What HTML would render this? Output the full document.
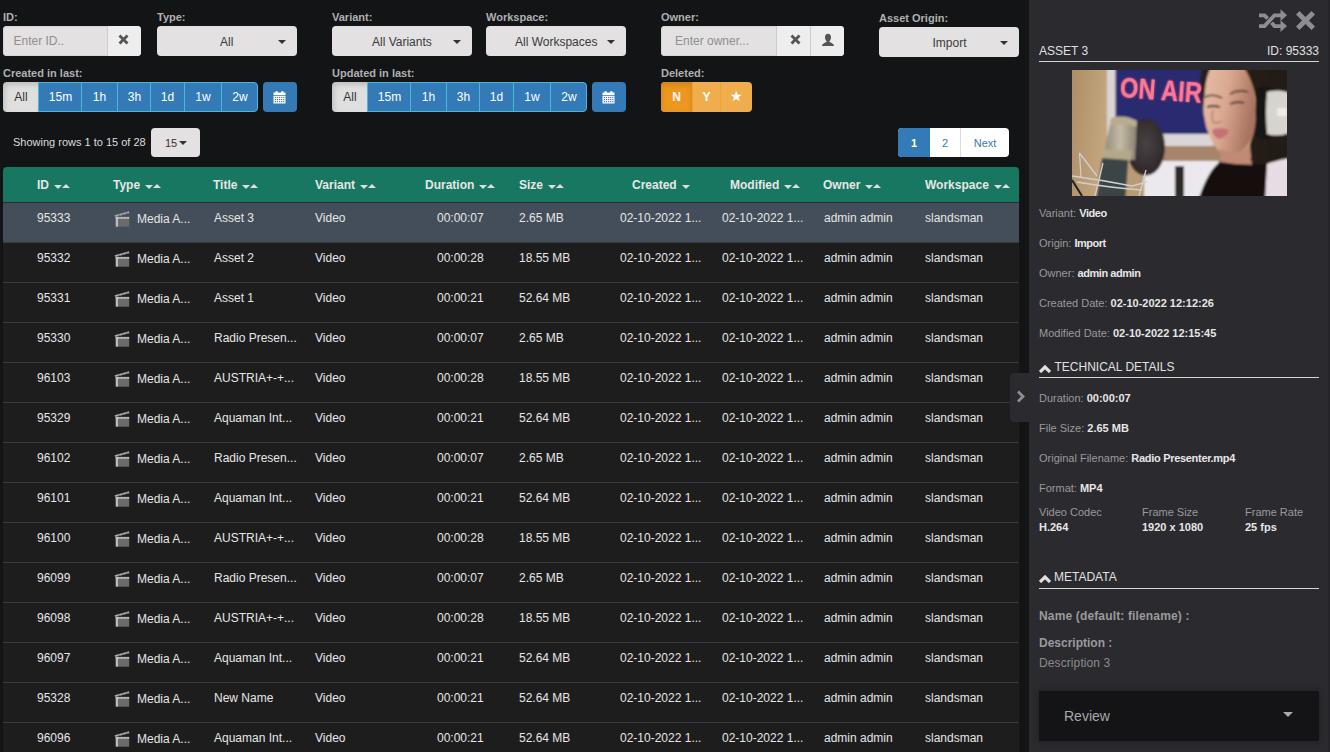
<!DOCTYPE html>
<html><head><meta charset="utf-8">
<style>
*{box-sizing:border-box;margin:0;padding:0}
html,body{width:1330px;height:752px;overflow:hidden;background:#131416;font-family:"Liberation Sans",sans-serif;color:#ddd}
.a{position:absolute}
.lbl{position:absolute;font-size:11px;font-weight:bold;color:#b0b0b0;line-height:13px}
.inp{position:absolute;height:30px;background:#e3e1e2;border-radius:4px;overflow:hidden;box-shadow:inset 0 0 0 1px #d6d4d5}
.ph{position:absolute;font-size:12px;color:#8f8f8f;line-height:30px}
.addon{position:absolute;top:0;height:30px;background:#eeeeee;border-left:1px solid #ccc}
.sel{position:absolute;height:30px;background:#e3e1e2;border-radius:4px;font-size:12px;color:#3a3a3a;line-height:32px}
.caret{position:absolute;width:0;height:0;border-left:4px solid transparent;border-right:4px solid transparent;border-top:4px solid #333}
.grp{position:absolute;height:30px;border-radius:4px;background:#337ab7;border:1px solid #46b8da;overflow:hidden}
.grp div{position:absolute;top:0;height:28px;line-height:28px;text-align:center;font-size:12px;color:#fff;border-left:1px solid #46b8da}
.grp div.act{background:#e0dfe0;color:#333;border-left:none;box-shadow:inset 0 3px 5px rgba(0,0,0,.125)}
.allb{position:absolute;width:36px;height:30px;border-radius:4px 0 0 4px;background:#e0dfe0;color:#333;font-size:12px;line-height:30px;text-align:center;box-shadow:inset 2px 3px 5px rgba(0,0,0,.14)}
.grp{border-radius:0 4px 4px 0}
.cal{position:absolute;width:34px;height:30px;border-radius:4px;background:#337ab7}
table{border-collapse:collapse}
.hdr{position:absolute;left:3px;top:167px;width:1016px;height:35px;background:#177760;border-radius:4px 4px 0 0}
.th{position:absolute;top:1px;line-height:35px;font-size:12px;font-weight:bold;color:#e6e6e6}
.row{position:absolute;left:3px;width:1016px;height:40px;background:#1d1d1e;border-top:1px solid #3a3a3a}
.td{position:absolute;top:0;line-height:30px;font-size:12px;color:#e6e6e6;white-space:nowrap}
.row.rsel{background:#444e5a;border-top-color:#2e2c2b}
.row .clap{position:absolute;left:111px;top:7px}
.th i{display:inline-block;position:relative;width:16px;height:8px;margin-left:5px;vertical-align:middle;top:1px}
.th i.srt:before{content:"";position:absolute;left:0;top:2px;border-left:4px solid transparent;border-right:4px solid transparent;border-top:4px solid #ddd}
.th i.srt:after{content:"";position:absolute;left:8px;top:1px;border-left:4px solid transparent;border-right:4px solid transparent;border-bottom:4px solid #ddd}
.th i.dn:before{content:"";position:absolute;left:0;top:2px;border-left:4px solid transparent;border-right:4px solid transparent;border-top:4px solid #ddd}
.pl{position:absolute;left:10px;font-size:11px;color:#9a9a9c;line-height:15px;white-space:nowrap}
.pl b{color:#e6e6e6}
.sh{position:absolute;left:10px;font-size:12px;color:#e0e0e0;line-height:15px}
.chev{display:inline-block;position:relative;width:12px;height:10px;margin-right:3px}
.chev:before{content:"";position:absolute;left:2px;top:6px;width:6px;height:6px;border-left:3px solid #e0e0e0;border-top:3px solid #e0e0e0;transform:rotate(45deg)}
.panel{position:absolute;left:1029px;top:0;width:301px;height:752px;background:#2b2a2f}
</style></head><body>

<!-- Filters row 1 -->
<div class="lbl" style="left:3px;top:11px">ID:</div>
<div class="inp" style="left:3px;top:26px;width:138px">
  <div class="ph" style="left:10.5px">Enter ID..</div>
  <div class="addon" style="left:104px;width:34px"></div><svg class="a" style="left:115px;top:8px" width="11" height="11" viewBox="0 0 11 11"><path d="M0.5 2.5L2.5 0.5 5.5 3.5 8.5 0.5 10.5 2.5 7.5 5.5 10.5 8.5 8.5 10.5 5.5 7.5 2.5 10.5 0.5 8.5 3.5 5.5z" fill="#555"/></svg>
</div>

<div class="lbl" style="left:157px;top:11px">Type:</div>
<div class="sel" style="left:157px;top:26px;width:140px"><span class="a" style="left:63px">All</span><div class="caret" style="left:121px;top:14px"></div></div>

<div class="lbl" style="left:332px;top:11px">Variant:</div>
<div class="sel" style="left:332px;top:26px;width:140px"><span class="a" style="left:40px">All Variants</span><div class="caret" style="left:121px;top:14px"></div></div>

<div class="lbl" style="left:486px;top:11px">Workspace:</div>
<div class="sel" style="left:486px;top:26px;width:140px"><span class="a" style="left:29px">All Workspaces</span><div class="caret" style="left:121px;top:14px"></div></div>

<div class="lbl" style="left:661px;top:11px">Owner:</div>
<div class="inp" style="left:661px;top:26px;width:183px">
  <div class="ph" style="left:14px">Enter owner...</div>
  <div class="addon" style="left:115px;width:34px"></div>
  <div class="addon" style="left:149px;width:34px"></div><svg class="a" style="left:129px;top:8px" width="11" height="11" viewBox="0 0 11 11"><path d="M0.5 2.5L2.5 0.5 5.5 3.5 8.5 0.5 10.5 2.5 7.5 5.5 10.5 8.5 8.5 10.5 5.5 7.5 2.5 10.5 0.5 8.5 3.5 5.5z" fill="#555"/></svg>
</div>

<div class="lbl" style="left:879px;top:12px">Asset Origin:</div>
<div class="sel" style="left:879px;top:27px;width:140px"><span class="a" style="left:53.5px">Import</span><div class="caret" style="left:121px;top:14px"></div></div>

<!-- Row 2 -->
<div class="lbl" style="left:3px;top:67px">Created in last:</div>
<div class="allb" style="left:3px;top:82px">All</div>
<div class="grp" style="left:38px;top:82px;width:220px">
  <div style="left:0;width:43px;border-left:none">15m</div>
  <div style="left:42px;width:36px">1h</div>
  <div style="left:78px;width:34px">3h</div>
  <div style="left:111px;width:34px">1d</div>
  <div style="left:145px;width:37px">1w</div>
  <div style="left:182px;width:37px">2w</div>
</div>
<div class="cal" style="left:263px;top:82px"></div><svg class="a" style="left:273px;top:90px" width="13" height="14" viewBox="0 0 13 14"><path d="M0.5 2.5h2V1.2h2.2v1.3h3.6V1.2h2.2v1.3h2v2.8H0.5z" fill="#fff"/><rect x="0.5" y="6" width="12" height="7.5" fill="#fff"/><g fill="#5b6fd6"><rect x="1.8" y="6.9" width="1.2" height="1.2"/><rect x="1.8" y="9.0" width="1.2" height="1.2"/><rect x="1.8" y="11.1" width="1.2" height="1.2"/><rect x="3.9" y="6.9" width="1.2" height="1.2"/><rect x="3.9" y="9.0" width="1.2" height="1.2"/><rect x="3.9" y="11.1" width="1.2" height="1.2"/><rect x="6.0" y="6.9" width="1.2" height="1.2"/><rect x="6.0" y="9.0" width="1.2" height="1.2"/><rect x="6.0" y="11.1" width="1.2" height="1.2"/><rect x="8.1" y="6.9" width="1.2" height="1.2"/><rect x="8.1" y="9.0" width="1.2" height="1.2"/><rect x="8.1" y="11.1" width="1.2" height="1.2"/><rect x="10.2" y="6.9" width="1.2" height="1.2"/><rect x="10.2" y="9.0" width="1.2" height="1.2"/><rect x="10.2" y="11.1" width="1.2" height="1.2"/></g></svg>

<div class="lbl" style="left:332px;top:67px">Updated in last:</div>
<div class="allb" style="left:332px;top:82px">All</div>
<div class="grp" style="left:367px;top:82px;width:220px">
  <div style="left:0;width:43px;border-left:none">15m</div>
  <div style="left:42px;width:36px">1h</div>
  <div style="left:78px;width:34px">3h</div>
  <div style="left:111px;width:34px">1d</div>
  <div style="left:145px;width:37px">1w</div>
  <div style="left:182px;width:37px">2w</div>
</div>
<div class="cal" style="left:592px;top:82px"></div><svg class="a" style="left:602px;top:90px" width="13" height="14" viewBox="0 0 13 14"><path d="M0.5 2.5h2V1.2h2.2v1.3h3.6V1.2h2.2v1.3h2v2.8H0.5z" fill="#fff"/><rect x="0.5" y="6" width="12" height="7.5" fill="#fff"/><g fill="#5b6fd6"><rect x="1.8" y="6.9" width="1.2" height="1.2"/><rect x="1.8" y="9.0" width="1.2" height="1.2"/><rect x="1.8" y="11.1" width="1.2" height="1.2"/><rect x="3.9" y="6.9" width="1.2" height="1.2"/><rect x="3.9" y="9.0" width="1.2" height="1.2"/><rect x="3.9" y="11.1" width="1.2" height="1.2"/><rect x="6.0" y="6.9" width="1.2" height="1.2"/><rect x="6.0" y="9.0" width="1.2" height="1.2"/><rect x="6.0" y="11.1" width="1.2" height="1.2"/><rect x="8.1" y="6.9" width="1.2" height="1.2"/><rect x="8.1" y="9.0" width="1.2" height="1.2"/><rect x="8.1" y="11.1" width="1.2" height="1.2"/><rect x="10.2" y="6.9" width="1.2" height="1.2"/><rect x="10.2" y="9.0" width="1.2" height="1.2"/><rect x="10.2" y="11.1" width="1.2" height="1.2"/></g></svg>

<svg class="a" style="left:821px;top:33px" width="14" height="14" viewBox="0 0 14 14"><path d="M7 0.8C8.9 0.8 10 2.2 10 4.2 10 6 9.2 7.6 8.4 8.2L8.4 9C10.5 9.6 12.6 11 13.2 13H0.8C1.4 11 3.5 9.6 5.6 9L5.6 8.2C4.8 7.6 4 6 4 4.2 4 2.2 5.1 0.8 7 0.8z" fill="#555"/></svg>
<div class="lbl" style="left:661px;top:67px">Deleted:</div>

<!-- Row 3 -->
<div class="a" style="left:13px;top:136px;font-size:11px;color:#ddd">Showing rows 1 to 15 of 28</div>

<!-- deleted -->
<div class="a" style="left:661px;top:82px;width:91px;height:30px;border-radius:4px;overflow:hidden;background:#f0ad4e">
  <div class="a" style="left:0;top:0;width:31px;height:30px;background:#ec971f;box-shadow:inset 0 3px 5px rgba(0,0,0,.125);color:#fff;font-size:12px;line-height:30px;text-align:center;font-weight:bold">N</div>
  <div class="a" style="left:31px;top:0;width:28px;height:30px;border-left:1px solid #eea236;color:#fff;font-size:12px;line-height:30px;text-align:center;font-weight:bold">Y</div>
  <div class="a" style="left:59px;top:0;width:32px;height:30px;border-left:1px solid #eea236;color:#fff;font-size:14px;line-height:28px;padding-right:1px;text-align:center">&#9733;</div>
</div>
<!-- page size -->
<div class="a" style="left:151px;top:128px;width:49px;height:29px;border-radius:4px;background:#e3e1e2;color:#333;font-size:11px;line-height:30px"><span class="a" style="left:14px">15</span><div class="caret" style="left:28px;top:13px;border-width:4px 4px 0 4px"></div></div>
<!-- pagination -->
<div class="a" style="left:898px;top:128px;width:111px;height:29px;border-radius:4px;overflow:hidden;background:#fff;font-size:11px;line-height:30px">
  <div class="a" style="left:0;top:0;width:32px;height:29px;background:#337ab7;color:#fff;text-align:center;font-weight:bold">1</div>
  <div class="a" style="left:32px;top:0;width:31px;height:29px;color:#337ab7;text-align:center;border-right:1px solid #ddd">2</div>
  <div class="a" style="left:63px;top:0;width:48px;height:29px;color:#337ab7;text-align:center">Next</div>
</div>
<!-- table -->
<div class="hdr">
  <div class="th" style="left:34px">ID<i class="srt"></i></div>
  <div class="th" style="left:110px">Type<i class="srt"></i></div>
  <div class="th" style="left:210px">Title<i class="srt"></i></div>
  <div class="th" style="left:312px">Variant<i class="srt"></i></div>
  <div class="th" style="left:422px">Duration<i class="srt"></i></div>
  <div class="th" style="left:516px">Size<i class="srt"></i></div>
  <div class="th" style="left:629px">Created<i class="dn"></i></div>
  <div class="th" style="left:727px">Modified<i class="srt"></i></div>
  <div class="th" style="left:820px">Owner<i class="srt"></i></div>
  <div class="th" style="left:922px">Workspace<i class="srt"></i></div>
</div>
<!--ROWS-->
<div class="row rsel" style="top:202px"><div class="td" style="left:34px">95333</div><svg class="clap" width="17" height="18" viewBox="0 0 17 18"><rect x="3.8" y="8.6" width="11.4" height="8.1" fill="#6b6b6b"/><rect x="1.7" y="7.2" width="2.3" height="9.5" fill="#bcbcbc"/><rect x="1.7" y="6.9" width="13.5" height="1.9" fill="#c4c4c4"/><g fill="#8a8a8a"><rect x="5.2" y="7.4" width="1.4" height="1"/><rect x="8.4" y="7.4" width="1.4" height="1"/><rect x="11.6" y="7.4" width="1.4" height="1"/></g><path d="M0.6 5.2 L15 1.2 L15.3 3.2 L1.2 7.1 z" fill="#a9a9a9"/><g fill="#6a6a6a"><path d="M4.3 4.9 l1.6-0.45 0.3 1.1 -1.6 0.45z"/><path d="M8 3.9 l1.6-0.45 0.3 1.1 -1.6 0.45z"/><path d="M11.7 2.85 l1.6-0.45 0.3 1.1 -1.6 0.45z"/></g></svg><div class="td" style="left:134px;top:1px">Media A...</div><div class="td" style="left:211px">Asset 3</div><div class="td" style="left:312px">Video</div><div class="td" style="left:434px">00:00:07</div><div class="td" style="left:516px">2.65 MB</div><div class="td" style="left:617px">02-10-2022 1...</div><div class="td" style="left:719px">02-10-2022 1...</div><div class="td" style="left:821px">admin admin</div><div class="td" style="left:922px">slandsman</div></div>
<div class="row" style="top:242px"><div class="td" style="left:34px">95332</div><svg class="clap" width="17" height="18" viewBox="0 0 17 18"><rect x="3.8" y="8.6" width="11.4" height="8.1" fill="#6b6b6b"/><rect x="1.7" y="7.2" width="2.3" height="9.5" fill="#bcbcbc"/><rect x="1.7" y="6.9" width="13.5" height="1.9" fill="#c4c4c4"/><g fill="#8a8a8a"><rect x="5.2" y="7.4" width="1.4" height="1"/><rect x="8.4" y="7.4" width="1.4" height="1"/><rect x="11.6" y="7.4" width="1.4" height="1"/></g><path d="M0.6 5.2 L15 1.2 L15.3 3.2 L1.2 7.1 z" fill="#a9a9a9"/><g fill="#6a6a6a"><path d="M4.3 4.9 l1.6-0.45 0.3 1.1 -1.6 0.45z"/><path d="M8 3.9 l1.6-0.45 0.3 1.1 -1.6 0.45z"/><path d="M11.7 2.85 l1.6-0.45 0.3 1.1 -1.6 0.45z"/></g></svg><div class="td" style="left:134px;top:1px">Media A...</div><div class="td" style="left:211px">Asset 2</div><div class="td" style="left:312px">Video</div><div class="td" style="left:434px">00:00:28</div><div class="td" style="left:516px">18.55 MB</div><div class="td" style="left:617px">02-10-2022 1...</div><div class="td" style="left:719px">02-10-2022 1...</div><div class="td" style="left:821px">admin admin</div><div class="td" style="left:922px">slandsman</div></div>
<div class="row" style="top:282px"><div class="td" style="left:34px">95331</div><svg class="clap" width="17" height="18" viewBox="0 0 17 18"><rect x="3.8" y="8.6" width="11.4" height="8.1" fill="#6b6b6b"/><rect x="1.7" y="7.2" width="2.3" height="9.5" fill="#bcbcbc"/><rect x="1.7" y="6.9" width="13.5" height="1.9" fill="#c4c4c4"/><g fill="#8a8a8a"><rect x="5.2" y="7.4" width="1.4" height="1"/><rect x="8.4" y="7.4" width="1.4" height="1"/><rect x="11.6" y="7.4" width="1.4" height="1"/></g><path d="M0.6 5.2 L15 1.2 L15.3 3.2 L1.2 7.1 z" fill="#a9a9a9"/><g fill="#6a6a6a"><path d="M4.3 4.9 l1.6-0.45 0.3 1.1 -1.6 0.45z"/><path d="M8 3.9 l1.6-0.45 0.3 1.1 -1.6 0.45z"/><path d="M11.7 2.85 l1.6-0.45 0.3 1.1 -1.6 0.45z"/></g></svg><div class="td" style="left:134px;top:1px">Media A...</div><div class="td" style="left:211px">Asset 1</div><div class="td" style="left:312px">Video</div><div class="td" style="left:434px">00:00:21</div><div class="td" style="left:516px">52.64 MB</div><div class="td" style="left:617px">02-10-2022 1...</div><div class="td" style="left:719px">02-10-2022 1...</div><div class="td" style="left:821px">admin admin</div><div class="td" style="left:922px">slandsman</div></div>
<div class="row" style="top:322px"><div class="td" style="left:34px">95330</div><svg class="clap" width="17" height="18" viewBox="0 0 17 18"><rect x="3.8" y="8.6" width="11.4" height="8.1" fill="#6b6b6b"/><rect x="1.7" y="7.2" width="2.3" height="9.5" fill="#bcbcbc"/><rect x="1.7" y="6.9" width="13.5" height="1.9" fill="#c4c4c4"/><g fill="#8a8a8a"><rect x="5.2" y="7.4" width="1.4" height="1"/><rect x="8.4" y="7.4" width="1.4" height="1"/><rect x="11.6" y="7.4" width="1.4" height="1"/></g><path d="M0.6 5.2 L15 1.2 L15.3 3.2 L1.2 7.1 z" fill="#a9a9a9"/><g fill="#6a6a6a"><path d="M4.3 4.9 l1.6-0.45 0.3 1.1 -1.6 0.45z"/><path d="M8 3.9 l1.6-0.45 0.3 1.1 -1.6 0.45z"/><path d="M11.7 2.85 l1.6-0.45 0.3 1.1 -1.6 0.45z"/></g></svg><div class="td" style="left:134px;top:1px">Media A...</div><div class="td" style="left:211px">Radio Presen...</div><div class="td" style="left:312px">Video</div><div class="td" style="left:434px">00:00:07</div><div class="td" style="left:516px">2.65 MB</div><div class="td" style="left:617px">02-10-2022 1...</div><div class="td" style="left:719px">02-10-2022 1...</div><div class="td" style="left:821px">admin admin</div><div class="td" style="left:922px">slandsman</div></div>
<div class="row" style="top:362px"><div class="td" style="left:34px">96103</div><svg class="clap" width="17" height="18" viewBox="0 0 17 18"><rect x="3.8" y="8.6" width="11.4" height="8.1" fill="#6b6b6b"/><rect x="1.7" y="7.2" width="2.3" height="9.5" fill="#bcbcbc"/><rect x="1.7" y="6.9" width="13.5" height="1.9" fill="#c4c4c4"/><g fill="#8a8a8a"><rect x="5.2" y="7.4" width="1.4" height="1"/><rect x="8.4" y="7.4" width="1.4" height="1"/><rect x="11.6" y="7.4" width="1.4" height="1"/></g><path d="M0.6 5.2 L15 1.2 L15.3 3.2 L1.2 7.1 z" fill="#a9a9a9"/><g fill="#6a6a6a"><path d="M4.3 4.9 l1.6-0.45 0.3 1.1 -1.6 0.45z"/><path d="M8 3.9 l1.6-0.45 0.3 1.1 -1.6 0.45z"/><path d="M11.7 2.85 l1.6-0.45 0.3 1.1 -1.6 0.45z"/></g></svg><div class="td" style="left:134px;top:1px">Media A...</div><div class="td" style="left:211px">AUSTRIA+-+...</div><div class="td" style="left:312px">Video</div><div class="td" style="left:434px">00:00:28</div><div class="td" style="left:516px">18.55 MB</div><div class="td" style="left:617px">02-10-2022 1...</div><div class="td" style="left:719px">02-10-2022 1...</div><div class="td" style="left:821px">admin admin</div><div class="td" style="left:922px">slandsman</div></div>
<div class="row" style="top:402px"><div class="td" style="left:34px">95329</div><svg class="clap" width="17" height="18" viewBox="0 0 17 18"><rect x="3.8" y="8.6" width="11.4" height="8.1" fill="#6b6b6b"/><rect x="1.7" y="7.2" width="2.3" height="9.5" fill="#bcbcbc"/><rect x="1.7" y="6.9" width="13.5" height="1.9" fill="#c4c4c4"/><g fill="#8a8a8a"><rect x="5.2" y="7.4" width="1.4" height="1"/><rect x="8.4" y="7.4" width="1.4" height="1"/><rect x="11.6" y="7.4" width="1.4" height="1"/></g><path d="M0.6 5.2 L15 1.2 L15.3 3.2 L1.2 7.1 z" fill="#a9a9a9"/><g fill="#6a6a6a"><path d="M4.3 4.9 l1.6-0.45 0.3 1.1 -1.6 0.45z"/><path d="M8 3.9 l1.6-0.45 0.3 1.1 -1.6 0.45z"/><path d="M11.7 2.85 l1.6-0.45 0.3 1.1 -1.6 0.45z"/></g></svg><div class="td" style="left:134px;top:1px">Media A...</div><div class="td" style="left:211px">Aquaman Int...</div><div class="td" style="left:312px">Video</div><div class="td" style="left:434px">00:00:21</div><div class="td" style="left:516px">52.64 MB</div><div class="td" style="left:617px">02-10-2022 1...</div><div class="td" style="left:719px">02-10-2022 1...</div><div class="td" style="left:821px">admin admin</div><div class="td" style="left:922px">slandsman</div></div>
<div class="row" style="top:442px"><div class="td" style="left:34px">96102</div><svg class="clap" width="17" height="18" viewBox="0 0 17 18"><rect x="3.8" y="8.6" width="11.4" height="8.1" fill="#6b6b6b"/><rect x="1.7" y="7.2" width="2.3" height="9.5" fill="#bcbcbc"/><rect x="1.7" y="6.9" width="13.5" height="1.9" fill="#c4c4c4"/><g fill="#8a8a8a"><rect x="5.2" y="7.4" width="1.4" height="1"/><rect x="8.4" y="7.4" width="1.4" height="1"/><rect x="11.6" y="7.4" width="1.4" height="1"/></g><path d="M0.6 5.2 L15 1.2 L15.3 3.2 L1.2 7.1 z" fill="#a9a9a9"/><g fill="#6a6a6a"><path d="M4.3 4.9 l1.6-0.45 0.3 1.1 -1.6 0.45z"/><path d="M8 3.9 l1.6-0.45 0.3 1.1 -1.6 0.45z"/><path d="M11.7 2.85 l1.6-0.45 0.3 1.1 -1.6 0.45z"/></g></svg><div class="td" style="left:134px;top:1px">Media A...</div><div class="td" style="left:211px">Radio Presen...</div><div class="td" style="left:312px">Video</div><div class="td" style="left:434px">00:00:07</div><div class="td" style="left:516px">2.65 MB</div><div class="td" style="left:617px">02-10-2022 1...</div><div class="td" style="left:719px">02-10-2022 1...</div><div class="td" style="left:821px">admin admin</div><div class="td" style="left:922px">slandsman</div></div>
<div class="row" style="top:482px"><div class="td" style="left:34px">96101</div><svg class="clap" width="17" height="18" viewBox="0 0 17 18"><rect x="3.8" y="8.6" width="11.4" height="8.1" fill="#6b6b6b"/><rect x="1.7" y="7.2" width="2.3" height="9.5" fill="#bcbcbc"/><rect x="1.7" y="6.9" width="13.5" height="1.9" fill="#c4c4c4"/><g fill="#8a8a8a"><rect x="5.2" y="7.4" width="1.4" height="1"/><rect x="8.4" y="7.4" width="1.4" height="1"/><rect x="11.6" y="7.4" width="1.4" height="1"/></g><path d="M0.6 5.2 L15 1.2 L15.3 3.2 L1.2 7.1 z" fill="#a9a9a9"/><g fill="#6a6a6a"><path d="M4.3 4.9 l1.6-0.45 0.3 1.1 -1.6 0.45z"/><path d="M8 3.9 l1.6-0.45 0.3 1.1 -1.6 0.45z"/><path d="M11.7 2.85 l1.6-0.45 0.3 1.1 -1.6 0.45z"/></g></svg><div class="td" style="left:134px;top:1px">Media A...</div><div class="td" style="left:211px">Aquaman Int...</div><div class="td" style="left:312px">Video</div><div class="td" style="left:434px">00:00:21</div><div class="td" style="left:516px">52.64 MB</div><div class="td" style="left:617px">02-10-2022 1...</div><div class="td" style="left:719px">02-10-2022 1...</div><div class="td" style="left:821px">admin admin</div><div class="td" style="left:922px">slandsman</div></div>
<div class="row" style="top:522px"><div class="td" style="left:34px">96100</div><svg class="clap" width="17" height="18" viewBox="0 0 17 18"><rect x="3.8" y="8.6" width="11.4" height="8.1" fill="#6b6b6b"/><rect x="1.7" y="7.2" width="2.3" height="9.5" fill="#bcbcbc"/><rect x="1.7" y="6.9" width="13.5" height="1.9" fill="#c4c4c4"/><g fill="#8a8a8a"><rect x="5.2" y="7.4" width="1.4" height="1"/><rect x="8.4" y="7.4" width="1.4" height="1"/><rect x="11.6" y="7.4" width="1.4" height="1"/></g><path d="M0.6 5.2 L15 1.2 L15.3 3.2 L1.2 7.1 z" fill="#a9a9a9"/><g fill="#6a6a6a"><path d="M4.3 4.9 l1.6-0.45 0.3 1.1 -1.6 0.45z"/><path d="M8 3.9 l1.6-0.45 0.3 1.1 -1.6 0.45z"/><path d="M11.7 2.85 l1.6-0.45 0.3 1.1 -1.6 0.45z"/></g></svg><div class="td" style="left:134px;top:1px">Media A...</div><div class="td" style="left:211px">AUSTRIA+-+...</div><div class="td" style="left:312px">Video</div><div class="td" style="left:434px">00:00:28</div><div class="td" style="left:516px">18.55 MB</div><div class="td" style="left:617px">02-10-2022 1...</div><div class="td" style="left:719px">02-10-2022 1...</div><div class="td" style="left:821px">admin admin</div><div class="td" style="left:922px">slandsman</div></div>
<div class="row" style="top:562px"><div class="td" style="left:34px">96099</div><svg class="clap" width="17" height="18" viewBox="0 0 17 18"><rect x="3.8" y="8.6" width="11.4" height="8.1" fill="#6b6b6b"/><rect x="1.7" y="7.2" width="2.3" height="9.5" fill="#bcbcbc"/><rect x="1.7" y="6.9" width="13.5" height="1.9" fill="#c4c4c4"/><g fill="#8a8a8a"><rect x="5.2" y="7.4" width="1.4" height="1"/><rect x="8.4" y="7.4" width="1.4" height="1"/><rect x="11.6" y="7.4" width="1.4" height="1"/></g><path d="M0.6 5.2 L15 1.2 L15.3 3.2 L1.2 7.1 z" fill="#a9a9a9"/><g fill="#6a6a6a"><path d="M4.3 4.9 l1.6-0.45 0.3 1.1 -1.6 0.45z"/><path d="M8 3.9 l1.6-0.45 0.3 1.1 -1.6 0.45z"/><path d="M11.7 2.85 l1.6-0.45 0.3 1.1 -1.6 0.45z"/></g></svg><div class="td" style="left:134px;top:1px">Media A...</div><div class="td" style="left:211px">Radio Presen...</div><div class="td" style="left:312px">Video</div><div class="td" style="left:434px">00:00:07</div><div class="td" style="left:516px">2.65 MB</div><div class="td" style="left:617px">02-10-2022 1...</div><div class="td" style="left:719px">02-10-2022 1...</div><div class="td" style="left:821px">admin admin</div><div class="td" style="left:922px">slandsman</div></div>
<div class="row" style="top:602px"><div class="td" style="left:34px">96098</div><svg class="clap" width="17" height="18" viewBox="0 0 17 18"><rect x="3.8" y="8.6" width="11.4" height="8.1" fill="#6b6b6b"/><rect x="1.7" y="7.2" width="2.3" height="9.5" fill="#bcbcbc"/><rect x="1.7" y="6.9" width="13.5" height="1.9" fill="#c4c4c4"/><g fill="#8a8a8a"><rect x="5.2" y="7.4" width="1.4" height="1"/><rect x="8.4" y="7.4" width="1.4" height="1"/><rect x="11.6" y="7.4" width="1.4" height="1"/></g><path d="M0.6 5.2 L15 1.2 L15.3 3.2 L1.2 7.1 z" fill="#a9a9a9"/><g fill="#6a6a6a"><path d="M4.3 4.9 l1.6-0.45 0.3 1.1 -1.6 0.45z"/><path d="M8 3.9 l1.6-0.45 0.3 1.1 -1.6 0.45z"/><path d="M11.7 2.85 l1.6-0.45 0.3 1.1 -1.6 0.45z"/></g></svg><div class="td" style="left:134px;top:1px">Media A...</div><div class="td" style="left:211px">AUSTRIA+-+...</div><div class="td" style="left:312px">Video</div><div class="td" style="left:434px">00:00:28</div><div class="td" style="left:516px">18.55 MB</div><div class="td" style="left:617px">02-10-2022 1...</div><div class="td" style="left:719px">02-10-2022 1...</div><div class="td" style="left:821px">admin admin</div><div class="td" style="left:922px">slandsman</div></div>
<div class="row" style="top:642px"><div class="td" style="left:34px">96097</div><svg class="clap" width="17" height="18" viewBox="0 0 17 18"><rect x="3.8" y="8.6" width="11.4" height="8.1" fill="#6b6b6b"/><rect x="1.7" y="7.2" width="2.3" height="9.5" fill="#bcbcbc"/><rect x="1.7" y="6.9" width="13.5" height="1.9" fill="#c4c4c4"/><g fill="#8a8a8a"><rect x="5.2" y="7.4" width="1.4" height="1"/><rect x="8.4" y="7.4" width="1.4" height="1"/><rect x="11.6" y="7.4" width="1.4" height="1"/></g><path d="M0.6 5.2 L15 1.2 L15.3 3.2 L1.2 7.1 z" fill="#a9a9a9"/><g fill="#6a6a6a"><path d="M4.3 4.9 l1.6-0.45 0.3 1.1 -1.6 0.45z"/><path d="M8 3.9 l1.6-0.45 0.3 1.1 -1.6 0.45z"/><path d="M11.7 2.85 l1.6-0.45 0.3 1.1 -1.6 0.45z"/></g></svg><div class="td" style="left:134px;top:1px">Media A...</div><div class="td" style="left:211px">Aquaman Int...</div><div class="td" style="left:312px">Video</div><div class="td" style="left:434px">00:00:21</div><div class="td" style="left:516px">52.64 MB</div><div class="td" style="left:617px">02-10-2022 1...</div><div class="td" style="left:719px">02-10-2022 1...</div><div class="td" style="left:821px">admin admin</div><div class="td" style="left:922px">slandsman</div></div>
<div class="row" style="top:682px"><div class="td" style="left:34px">95328</div><svg class="clap" width="17" height="18" viewBox="0 0 17 18"><rect x="3.8" y="8.6" width="11.4" height="8.1" fill="#6b6b6b"/><rect x="1.7" y="7.2" width="2.3" height="9.5" fill="#bcbcbc"/><rect x="1.7" y="6.9" width="13.5" height="1.9" fill="#c4c4c4"/><g fill="#8a8a8a"><rect x="5.2" y="7.4" width="1.4" height="1"/><rect x="8.4" y="7.4" width="1.4" height="1"/><rect x="11.6" y="7.4" width="1.4" height="1"/></g><path d="M0.6 5.2 L15 1.2 L15.3 3.2 L1.2 7.1 z" fill="#a9a9a9"/><g fill="#6a6a6a"><path d="M4.3 4.9 l1.6-0.45 0.3 1.1 -1.6 0.45z"/><path d="M8 3.9 l1.6-0.45 0.3 1.1 -1.6 0.45z"/><path d="M11.7 2.85 l1.6-0.45 0.3 1.1 -1.6 0.45z"/></g></svg><div class="td" style="left:134px;top:1px">Media A...</div><div class="td" style="left:211px">New Name</div><div class="td" style="left:312px">Video</div><div class="td" style="left:434px">00:00:21</div><div class="td" style="left:516px">52.64 MB</div><div class="td" style="left:617px">02-10-2022 1...</div><div class="td" style="left:719px">02-10-2022 1...</div><div class="td" style="left:821px">admin admin</div><div class="td" style="left:922px">slandsman</div></div>
<div class="row" style="top:722px"><div class="td" style="left:34px">96096</div><svg class="clap" width="17" height="18" viewBox="0 0 17 18"><rect x="3.8" y="8.6" width="11.4" height="8.1" fill="#6b6b6b"/><rect x="1.7" y="7.2" width="2.3" height="9.5" fill="#bcbcbc"/><rect x="1.7" y="6.9" width="13.5" height="1.9" fill="#c4c4c4"/><g fill="#8a8a8a"><rect x="5.2" y="7.4" width="1.4" height="1"/><rect x="8.4" y="7.4" width="1.4" height="1"/><rect x="11.6" y="7.4" width="1.4" height="1"/></g><path d="M0.6 5.2 L15 1.2 L15.3 3.2 L1.2 7.1 z" fill="#a9a9a9"/><g fill="#6a6a6a"><path d="M4.3 4.9 l1.6-0.45 0.3 1.1 -1.6 0.45z"/><path d="M8 3.9 l1.6-0.45 0.3 1.1 -1.6 0.45z"/><path d="M11.7 2.85 l1.6-0.45 0.3 1.1 -1.6 0.45z"/></g></svg><div class="td" style="left:134px;top:1px">Media A...</div><div class="td" style="left:211px">Aquaman Int...</div><div class="td" style="left:312px">Video</div><div class="td" style="left:434px">00:00:21</div><div class="td" style="left:516px">52.64 MB</div><div class="td" style="left:617px">02-10-2022 1...</div><div class="td" style="left:719px">02-10-2022 1...</div><div class="td" style="left:821px">admin admin</div><div class="td" style="left:922px">slandsman</div></div>
<!--/ROWS-->
<div class="a" style="left:1019px;top:0;width:10px;height:752px;background:#131416"></div>
<div class="panel"><div class="a" style="left:299px;top:0;width:2px;height:752px;background:#252529"></div>
  <svg class="a" style="left:230px;top:9px" width="29" height="24" viewBox="0 0 29 24"><g fill="none" stroke="#8e8e92" stroke-width="3.8">
    <path d="M0 17.1H5.5L15.5 6.3H22"/>
    <path d="M0 6.3H5.5L8.6 9.6"/><path d="M12.6 13.7L15.5 17.1H22"/>
  </g><g fill="#8e8e92"><path d="M21.5 0.3L28 6.3 21.5 12z"/><path d="M21.5 11.2L28 17.1 21.5 23z"/></g></svg>
  <svg class="a" style="left:267px;top:11px" width="19" height="19" viewBox="0 0 19 19"><path d="M0 3.5L3.5 0 9.5 6 15.5 0 19 3.5 13 9.5 19 15.5 15.5 19 9.5 13 3.5 19 0 15.5 6 9.5z" fill="#8e8e92"/></svg>
  <div class="a" style="left:10px;top:44px;font-size:12px;color:#e0e0e0">ASSET 3</div>
  <div class="a" style="left:238px;top:44px;font-size:12px;color:#e0e0e0">ID: 95333</div>
  <div class="a" style="left:10px;top:61px;width:280px;height:1px;background:#d4d4d4"></div>
  <svg class="a" style="left:43px;top:70px" width="215" height="126" viewBox="0 0 215 126">
  <defs>
    <filter id="bl" x="-5%" y="-5%" width="110%" height="110%"><feGaussianBlur stdDeviation="0.9"/></filter>
    <filter id="bl2" x="-10%" y="-10%" width="120%" height="120%"><feGaussianBlur stdDeviation="0.45"/></filter>
    <filter id="glow" x="-10%" y="-20%" width="120%" height="140%"><feGaussianBlur stdDeviation="0.9"/></filter>
    <linearGradient id="wall" x1="0" y1="0" x2="1" y2="0.3"><stop offset="0" stop-color="#a98a64"/><stop offset="1" stop-color="#c5a77f"/></linearGradient>
    <linearGradient id="skin" x1="0" y1="0" x2="1" y2="0.3"><stop offset="0" stop-color="#e6bea8"/><stop offset="0.5" stop-color="#dba890"/><stop offset="1" stop-color="#a87460"/></linearGradient>
    <linearGradient id="mesh" x1="0" y1="0" x2="1" y2="0"><stop offset="0" stop-color="#8c8676"/><stop offset="0.5" stop-color="#c4bba6"/><stop offset="1" stop-color="#8a8070"/></linearGradient>
    <radialGradient id="pop" cx="0.5" cy="0.45" r="0.55"><stop offset="0" stop-color="#4a4244"/><stop offset="1" stop-color="#2c2628"/></radialGradient>
  </defs>
  <rect width="215" height="126" fill="#b99c76"/>
  <g filter="url(#bl)">
    <rect x="-5" y="-5" width="42" height="136" fill="url(#wall)"/>
    <rect x="35" y="-5" width="10" height="83" fill="#d9d5d4"/>
    <rect x="43.5" y="-5" width="100" height="70" fill="#2b2b70"/>
    <rect x="43.5" y="64" width="98" height="12" fill="#dad5d8"/>
    <rect x="36" y="76" width="124" height="17" fill="#a5846a"/>
    <rect x="72" y="91" width="80" height="40" fill="#ebe9ed"/>
    <rect x="103" y="96" width="9" height="35" fill="#2f2a2c"/>
    <!-- hair back / dark right -->
    <path d="M165 -5 H220 V131 H126 L148 90 L176 86 L186 40 L178 -5Z" fill="#241a18"/>
    <!-- face -->
    <path d="M134 -5 H174 Q181 8 183 30 Q185 52 181 66 Q174 80 162 84 Q150 85 145 79 Q138 70 134 56 Q130 40 131 24 Q131 10 134 -5Z" fill="url(#skin)"/>
    <!-- neck -->
    <path d="M148 78 Q162 88 178 76 L180 96 Q165 104 148 96Z" fill="#c08a74"/>
    <!-- brows/eyes -->
    <path d="M133 27 Q141 23 150 28" stroke="#4a3028" stroke-width="1.6" fill="none"/>
    <path d="M158 24 Q166 19 176 22" stroke="#4a3028" stroke-width="1.6" fill="none"/>
    <path d="M135 37 Q141 35 148 37" stroke="#3a2420" stroke-width="1.8" fill="none"/>
    <path d="M158 34 Q165 31 172 33" stroke="#3a2420" stroke-width="1.8" fill="none"/>
    <path d="M141 40 Q139 48 141 52 Q146 54 150 51" stroke="#b88068" stroke-width="1.4" fill="none"/>
    <!-- lips -->
    <path d="M140 60 Q148 56 157 60 Q156 67 147 69 Q141 67 140 60Z" fill="#c57274"/>
    <!-- hair strands near face -->
    <path d="M130 -5 Q126 20 131 40 L133 20 Q134 6 140 -5Z" fill="#2a1c18"/>
    <path d="M170 -5 Q182 10 186 40 Q188 70 178 90 L195 90 L196 -5Z" fill="#261a18"/>
    <!-- scarf -->
    <path d="M126 131 Q136 100 148 92 Q170 96 196 94 L200 131Z" fill="#141010"/>
    <!-- shirt -->
    <path d="M195 94 Q205 90 220 88 V131 H193Z" fill="#e8dce4"/>
    <!-- headphones -->
    <path d="M185 18 Q196 14 205 20 L204 66 Q194 72 185 66 Q182 42 185 18Z" fill="#151212"/>
    <path d="M195 22 Q208 18 220 24 V62 Q206 68 195 64 Q193 42 195 22Z" fill="#d6d4cc"/>
    <rect x="205" y="38" width="10" height="8" fill="#eeeee8"/>
    <!-- pop filter -->
    <ellipse cx="74" cy="77" rx="19" ry="28.5" fill="url(#pop)"/>
    <!-- mic -->
    <path d="M39 49 L65 52 L63 90 L31 88Z" fill="url(#mesh)"/>
    <path d="M39 48 Q52 44 65 51 L64 57 Q52 52 38 56Z" fill="#b8ac90"/>
    <path d="M32 79 L60 81 L58 91 L31 90Z" fill="#b4a88a"/>
    <path d="M30 88 L56 90 L53 131 L24 131Z" fill="#3b4444"/>
  </g>
  <g stroke="#cfcfcf" stroke-width="1.3" fill="none" filter="url(#bl2)">
    <path d="M7.5 83 L9 107"/>
    <path d="M7.5 83 L25 106"/>
    <path d="M31 93 L23 126"/>
    <path d="M74 100 L67 126"/>
    <path d="M0 106 Q30 110 60 116 L75 112"/>
    <path d="M5 112 Q40 118 70 120"/>
  </g>
  <path d="M0 110 L10 126" stroke="#222" stroke-width="2" filter="url(#bl2)"/>
  <g transform="rotate(4 88 20)">
    <text x="48" y="30" font-family="Liberation Sans" font-weight="bold" font-size="29" fill="#ff4d78" textLength="82" lengthAdjust="spacingAndGlyphs" filter="url(#glow)">ON AIR</text>
    <text x="48" y="30" font-family="Liberation Sans" font-weight="bold" font-size="29" fill="#f77a96" textLength="82" lengthAdjust="spacingAndGlyphs" filter="url(#bl2)">ON AIR</text>
  </g>
</svg>
  <div class="pl" style="top:206px">Variant: <b style="letter-spacing:-0.4px">Video</b></div>
  <div class="pl" style="top:236px">Origin: <b style="letter-spacing:-0.5px">Import</b></div>
  <div class="pl" style="top:266px">Owner: <b style="letter-spacing:-0.45px">admin admin</b></div>
  <div class="pl" style="top:296px">Created Date: <b>02-10-2022 12:12:26</b></div>
  <div class="pl" style="top:326px">Modified Date: <b>02-10-2022 12:15:45</b></div>
  <div class="sh" style="top:360px;left:25.5px">TECHNICAL DETAILS</div><svg class="a" style="left:10px;top:363.5px" width="12" height="9" viewBox="0 0 12 9"><path d="M1 8 L6 3 L11 8" stroke="#e0e0e0" stroke-width="3.2" fill="none"/></svg>
  <div class="a" style="left:10px;top:377px;width:280px;height:1px;background:#d4d4d4"></div>
  <div class="pl" style="top:391px">Duration: <b>00:00:07</b></div>
  <div class="pl" style="top:421px">File Size: <b>2.65 MB</b></div>
  <div class="pl" style="top:451px">Original Filename: <b style="letter-spacing:-0.3px">Radio Presenter.mp4</b></div>
  <div class="pl" style="top:481px">Format: <b>MP4</b></div>
  <div class="pl" style="top:505px">Video Codec<br><b>H.264</b></div>
  <div class="pl" style="top:505px;left:113px">Frame Size<br><b>1920 x 1080</b></div>
  <div class="pl" style="top:505px;left:216px">Frame Rate<br><b>25 fps</b></div>
  <div class="sh" style="top:570px;left:25px">METADATA</div><svg class="a" style="left:10px;top:573.5px" width="12" height="9" viewBox="0 0 12 9"><path d="M1 8 L6 3 L11 8" stroke="#e0e0e0" stroke-width="3.2" fill="none"/></svg>
  <div class="a" style="left:10px;top:588px;width:280px;height:1px;background:#d4d4d4"></div>
  <div class="a" style="left:10px;top:609px;font-size:12px;font-weight:bold;color:#9a9a9c;letter-spacing:0.15px">Name (default: filename) :</div>
  <div class="a" style="left:10px;top:636px;font-size:12px;font-weight:bold;color:#9a9a9c">Description :</div>
  <div class="a" style="left:10px;top:656px;font-size:12px;color:#8a8a8c;letter-spacing:0.1px">Description 3</div>
  <div class="a" style="left:10px;top:691px;width:280px;height:50px;background:#141416;box-shadow:0 0 6px rgba(0,0,0,.35)">
    <div class="a" style="left:25px;top:17px;font-size:14px;color:#a8a8aa">Review</div>
    <div class="caret" style="left:244px;top:21px;border-width:5px 5px 0 5px;border-top-color:#a8a8aa"></div>
  </div>
</div>
<div class="a" style="left:1010px;top:373px;width:19px;height:49px;background:#2b2a2f;border-radius:4px 0 0 4px"></div>
<svg class="a" style="left:1016px;top:390px" width="10" height="13" viewBox="0 0 10 13"><path d="M1 2.5L3 0.5 9 6.5 3 12.5 1 10.5 5 6.5z" fill="#8e8e92"/></svg>

</body></html>
